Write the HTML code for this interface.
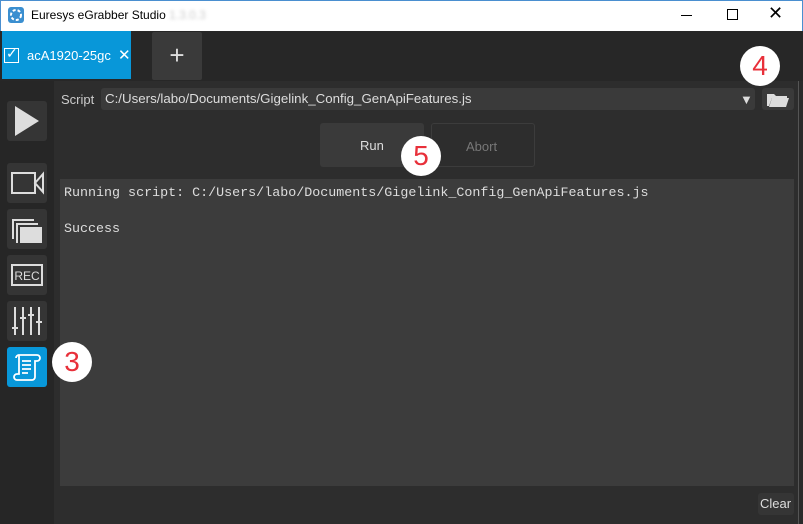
<!DOCTYPE html>
<html><head><style>
body{margin:0;width:803px;height:524px;overflow:hidden;background:#2d2d2d;font-family:"Liberation Sans",sans-serif;position:relative}
div{position:absolute;box-sizing:border-box}
.sb{left:7px;width:40px;height:40px;background:#353535;border-radius:3px}
.circ{width:40px;height:40px;border-radius:50%;background:#fff;color:#e8303a;font-size:28px;text-align:center;line-height:40px}
</style></head><body>
<div style="left:0;top:0;width:803px;height:31px;background:#fff;border:1px solid #4a8fd0;border-bottom:none"></div>
<div style="left:8px;top:7px;width:16px;height:16px;background:#3b8fd0;border-radius:3px"><svg width="16" height="16"><circle cx="8" cy="8" r="5" fill="none" stroke="#fff" stroke-width="2" stroke-dasharray="3 2"/></svg></div>
<div style="left:31px;top:8px;font-size:12px;color:#000">Euresys eGrabber Studio <span style="color:#ccc;filter:blur(1.5px)">1.3.0.3</span></div>
<div style="left:681px;top:15px;width:11px;height:1px;background:#000"></div>
<div style="left:727px;top:9px;width:11px;height:11px;border:1px solid #000"></div>
<div style="left:768px;top:3px;font-size:18px;color:#000">✕</div>
<div style="left:0;top:31px;width:803px;height:50px;background:#272727"></div>
<div style="left:2px;top:31px;width:129px;height:48px;background:#0897d9"></div>
<div style="left:4px;top:48px;width:15px;height:15px;border:1.5px solid #fff"></div>
<div style="left:6px;top:45px;color:#fff;font-size:14px">✓</div>
<div style="left:27px;top:48px;color:#fff;font-size:13px">acA1920-25gc</div>
<div style="left:118px;top:46px;color:#fff;font-size:15px">✕</div>
<div style="left:152px;top:32px;width:50px;height:48px;background:#3a3a3a;border-radius:2px;color:#ddd;font-size:26px;text-align:center;line-height:46px">+</div>
<div style="left:0;top:81px;width:54px;height:443px;background:#262626"></div>
<div style="left:798px;top:81px;width:5px;height:443px;background:#2a2a2a;border-left:1px solid #555"></div>
<div style="left:61px;top:92px;color:#ccc;font-size:13px">Script</div>
<div style="left:101px;top:88px;width:654px;height:22px;background:#3a3a3a;border-radius:3px;color:#ddd;font-size:13.3px;padding:3px 0 0 4px">C:/Users/labo/Documents/Gigelink_Config_GenApiFeatures.js</div>
<div style="left:740px;top:92px;color:#ddd;font-size:13px">▼</div>
<div style="left:762px;top:88px;width:32px;height:22px;background:#3a3a3a;border-radius:3px"><svg width="32" height="22"><path d="M5 6h7l2 2h11v2H10L7 18H5z" fill="#ddd"/><path d="M10 10h17l-3 9H7z" fill="#ddd"/></svg></div>
<div style="left:320px;top:123px;width:104px;height:44px;background:#3a3a3a;border-radius:3px;color:#ddd;font-size:13px;padding:15px 0 0 40px">Run</div>
<div style="left:431px;top:123px;width:104px;height:44px;border:1px solid #3c3c3c;border-radius:3px;color:#777;font-size:13px;padding:15px 0 0 34px">Abort</div>
<div class="circ" style="left:401px;top:136px">5</div>
<div class="circ" style="left:740px;top:46px">4</div>
<div style="left:60px;top:179px;width:734px;height:307px;background:#3c3c3c;font-family:'Liberation Mono',monospace;font-size:13.35px;color:#ddd;padding:6px 4px;line-height:18px;white-space:pre">Running script: C:/Users/labo/Documents/Gigelink_Config_GenApiFeatures.js

Success</div>
<div style="left:758px;top:493px;width:36px;height:22px;background:#353535;border-radius:3px;color:#ddd;font-size:13px;padding:3px 0 0 2px">Clear</div>
<div class="sb" style="top:101px"><svg width="40" height="40"><path d="M8 5L32 20L8 35Z" fill="#ddd"/></svg></div>
<div class="sb" style="top:163px"><svg width="40" height="40"><rect x="5" y="10" width="23" height="20" fill="none" stroke="#ddd" stroke-width="2"/><path d="M28 20L36 11V29Z" fill="none" stroke="#ddd" stroke-width="2"/></svg></div>
<div class="sb" style="top:209px"><svg width="40" height="40"><path d="M5 10h22v2H7v18H5z M9 14h22v2H11v18H9z" fill="#ddd"/><rect x="13" y="18" width="22" height="16" fill="#ddd"/></svg></div>
<div class="sb" style="top:255px"><svg width="40" height="40"><rect x="5" y="10" width="30" height="20" fill="none" stroke="#ddd" stroke-width="2"/><text x="20" y="25" font-size="12" fill="#ddd" text-anchor="middle" font-family="Liberation Sans">REC</text></svg></div>
<div class="sb" style="top:301px"><svg width="40" height="40" stroke="#ddd" stroke-width="2"><path d="M8 6v28M16 6v28M24 6v28M32 6v28M5 27h6M13 17h6M21 14h6M29 21h6"/></svg></div>
<div class="sb" style="top:347px;background:#0897d9"><svg width="40" height="40" fill="none" stroke="#fff" stroke-width="1.8"><path d="M12 8h18a3 3 0 0 1 0 6h-2v16a3 3 0 0 1-3 3H10a3 3 0 0 1 0-6h2z M12 8a3 3 0 0 0-3 3"/><path d="M15 14h9M15 18h9M15 22h9M15 26h6"/></svg></div>
<div class="circ" style="left:52px;top:342px">3</div>
</body></html>
